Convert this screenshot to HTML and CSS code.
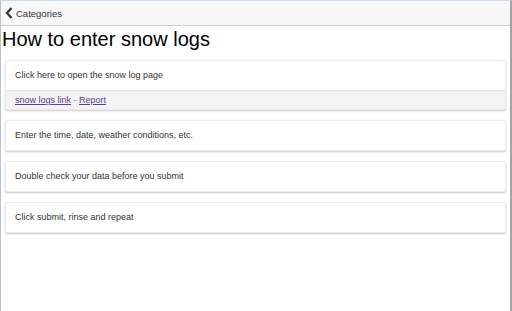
FILE: index.html
```html
<!DOCTYPE html>
<html lang="en">
<head>
  <title>How to enter snow logs</title>
  <meta name="viewport" content="width=device-width, initial-scale=1">
  <link rel="stylesheet" href="styles.css">
</head>
<body>
  <div class="frame">
    <div class="topbar">
      <a href="#" class="back-link">
        <svg class="chevron" width="8" height="12" viewBox="0 0 8 12">
          <path d="M6.5 1 L2 6 L6.5 11" fill="none" stroke="#333" stroke-width="2.2"/>
        </svg>
        <span>Categories</span>
      </a>
    </div>

    <h1 class="title">How to enter snow logs</h1>

    <div class="steps">
      <div class="card">
        <div class="card-body">Click here to open the snow log page</div>
        <div class="card-footer">
          <a href="#">snow logs link</a> - <a href="#">Report</a>
        </div>
      </div>
      <div class="card">
        <div class="card-body">Enter the time, date, weather conditions, etc.</div>
      </div>
      <div class="card">
        <div class="card-body">Double check your data before you submit</div>
      </div>
      <div class="card">
        <div class="card-body">Click submit, rinse and repeat</div>
      </div>
    </div>
  </div>
</body>
</html>
```

FILE: styles.css
```css
html, body {
  margin: 0;
  padding: 0;
  height: 100%;
}

body {
  font-family: "Liberation Sans", Arial, sans-serif;
  background-color: #fff;
  color: #333;
}

.frame {
  box-sizing: border-box;
  height: 311px;
  border-top: 1px solid #c8d8ee;
  border-left: 1px solid #b9c1cc;
  border-right: 2px solid #a4a4a4;
  overflow: hidden;
}

.topbar {
  height: 24px;
  background-color: #f7f7f7;
  border-bottom: 1px solid #cfcfcf;
  display: flex;
  align-items: center;
  padding-left: 4px;
}

.back-link {
  display: flex;
  align-items: center;
  gap: 3px;
  color: #333;
  text-decoration: none;
  font-size: 9.5px;
}

.chevron {
  display: block;
}

.title {
  margin: 0 0 8px 1px;
  font-size: 20px;
  font-weight: normal;
  line-height: 26px;
  color: #000;
}

.steps {
  display: flex;
  flex-direction: column;
  gap: 10px;
  padding: 0 4px;
}

.card {
  background-color: #fff;
  border: 1px solid #ececec;
  border-radius: 2px;
  box-shadow: 0 1px 2px rgba(0, 0, 0, 0.22);
}

.card-body {
  font-size: 9px;
  line-height: 13px;
  padding: 8px 9px;
}

.card-footer {
  font-size: 9px;
  line-height: 13px;
  padding: 3px 9px 2px;
  background-color: #f3f3f3;
  border-top: 1px solid #e3e3e3;
  color: #888;
}

.card-footer a {
  color: #5a3e92;
  text-decoration: underline;
}
```
